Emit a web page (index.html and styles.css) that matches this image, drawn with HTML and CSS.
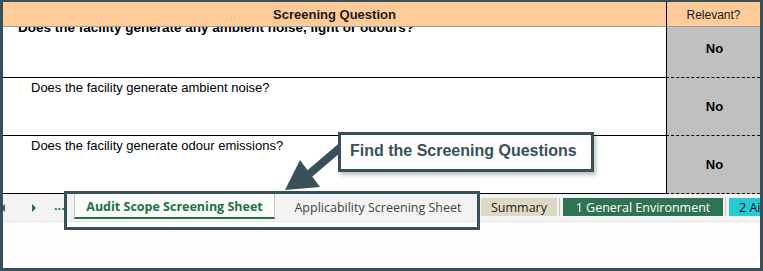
FILE: index.html
```html
<!DOCTYPE html>
<html>
<head>
    <title>Screening Questions</title>
    <link rel="stylesheet" href="styles.css">
</head>
<body>
    <div class="frame">
        <div class="sheet">
            <div class="head-cell">Screening Question</div>
            <div class="head-cell head-side">Relevant?</div>

            <div class="q-cell q-main"><span>Does the facility generate any ambient noise, light or odours?</span></div>
            <div class="ans-cell ans-first">No</div>

            <div class="q-cell q-sub">Does the facility generate ambient noise?</div>
            <div class="ans-cell">No</div>

            <div class="q-cell q-sub">Does the facility generate odour emissions?</div>
            <div class="ans-cell">No</div>
        </div>

        <div class="tab-bar">
            <div class="nav">
                <span class="nav-left"></span>
                <span class="nav-right"></span>
                <span class="nav-more">...</span>
            </div>
            <div class="tab tab-active">Audit Scope Screening Sheet</div>
            <div class="tab tab-plain">Applicability Screening Sheet</div>
            <div class="tab tab-summary">Summary</div>
            <div class="tab-sep"></div>
            <div class="tab tab-general">1 General Environment</div>
            <div class="tab-sep"></div>
            <div class="tab tab-air">2 Air</div>
        </div>

        <!-- callout overlay -->
        <div class="highlight"></div>
        <svg class="arrow" width="70" height="70" viewBox="0 0 70 70">
            <line x1="62" y1="20" x2="28" y2="49" stroke="#37505a" stroke-width="8"/>
            <polygon points="5,64 20,34 40,61" fill="#37505a"/>
        </svg>
        <div class="callout">Find the Screening Questions</div>
    </div>
</body>
</html>
```

FILE: styles.css
```css
body {
    margin: 0;
    background-color: #fff;
    font-family: "Liberation Sans", Arial, sans-serif;
}
.frame {
    position: relative;
    width: 763px;
    height: 271px;
    box-sizing: border-box;
    border: 3px solid #37505a;
    border-top-width: 2px;
    background-color: #fefefe;
    overflow: hidden;
}
.sheet {
    display: grid;
    grid-template-columns: 663px 94px;
    grid-template-rows: 25px 51px 58px 58px;
    background-color: #fff;
}
.head-cell {
    background-color: #ffcc99;
    border-bottom: 1px solid #9e9e9e;
    font-weight: bold;
    font-size: 13px;
    color: #1a1a1a;
    display: flex;
    align-items: center;
    justify-content: center;
    padding-top: 1px;
}
.head-side {
    border-left: 1px solid #000;
    font-weight: normal;
    font-size: 12px;
}
.q-cell {
    border-bottom: 1px solid #000;
    font-size: 13px;
    color: #000;
    overflow: hidden;
}
.q-main {
    font-weight: bold;
    font-size: 13.5px;
    padding-left: 15px;
}
.q-main span {
    display: block;
    margin-top: -7px;
}
.q-sub {
    padding-left: 28px;
    padding-top: 2px;
}
.ans-cell {
    background-color: #c0c0c0;
    border-left: 1px solid #000;
    border-bottom: 1px dashed #000;
    font-weight: bold;
    font-size: 13px;
    display: flex;
    align-items: center;
    justify-content: center;
    padding-left: 2px;
}
.ans-first {
    padding-bottom: 8px;
}
.tab-bar {
    display: flex;
    align-items: stretch;
    height: 28px;
    box-sizing: border-box;
    background-color: #f3f3f3;
    border-bottom: 1px solid #e6e6e6;
    font-family: "Open Sans", "Noto Sans", sans-serif;
    font-size: 12.5px;
}
.nav {
    width: 71px;
    flex-shrink: 0;
    display: flex;
    align-items: center;
}
.nav-left {
    width: 0;
    height: 0;
    border-top: 4px solid transparent;
    border-bottom: 4px solid transparent;
    border-right: 4px solid #217346;
    margin-left: -2px;
}
.nav-right {
    width: 0;
    height: 0;
    border-top: 4px solid transparent;
    border-bottom: 4px solid transparent;
    border-left: 4px solid #217346;
    margin-left: 27px;
}
.nav-more {
    margin-left: 18px;
    color: #217346;
    font-weight: bold;
    padding-bottom: 4px;
}
.tab {
    flex-shrink: 0;
    display: flex;
    align-items: center;
    justify-content: center;
    box-sizing: border-box;
    margin-top: 4px;
    margin-bottom: 5px;
    color: #444;
    white-space: nowrap;
}
.tab-active {
    width: 201px;
    margin: 0 0 2px;
    padding-top: 1px;
    background-color: #fbfbfb;
    border-left: 1px solid #c6c6c6;
    border-right: 1px solid #c6c6c6;
    border-bottom: 2px solid #217346;
    color: #217346;
    font-weight: bold;
}
.tab-plain {
    width: 206px;
}
.tab-summary {
    width: 76px;
    background-color: #ddd9c4;
    color: #222;
}
.tab-sep {
    width: 6px;
    flex-shrink: 0;
    margin-top: 4px;
    margin-bottom: 5px;
    position: relative;
}
.tab-sep::after {
    content: "";
    position: absolute;
    left: 2px;
    top: 0;
    bottom: 0;
    border-left: 1px solid #c8c8c8;
}
.tab-general {
    width: 160px;
    background-color: #2e7353;
    color: #fff;
}
.tab-air {
    background-color: #26cad4;
    color: #111;
    padding: 0 10px;
}
.highlight {
    position: absolute;
    left: 61px;
    top: 189px;
    width: 410px;
    height: 33px;
    border: 3px solid #37505a;
}
.arrow {
    position: absolute;
    left: 277px;
    top: 124px;
}
.callout {
    position: absolute;
    left: 335px;
    top: 130px;
    width: 241px;
    height: 32px;
    border: 3px solid #37505a;
    background-color: #fff;
    box-shadow: 2px 3px 4px rgba(0, 0, 0, 0.25);
    color: #37505a;
    font-weight: bold;
    font-size: 16px;
    padding-left: 9px;
    padding-bottom: 2px;
    display: flex;
    align-items: center;
}
```
